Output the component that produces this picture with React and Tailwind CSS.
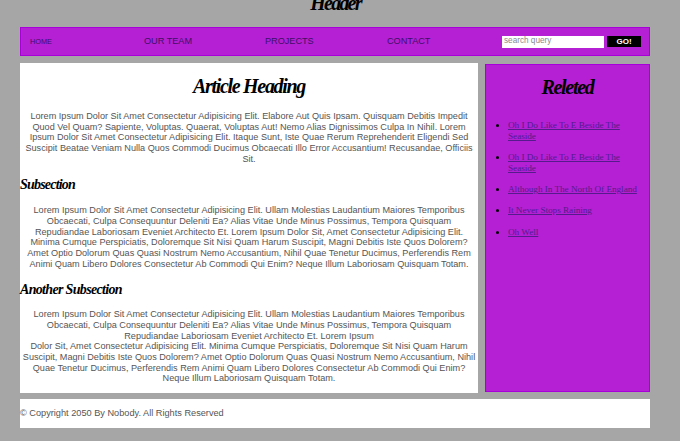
const para1 = [
  'Lorem Ipsum Dolor Sit Amet Consectetur Adipisicing Elit. Elabore Aut Quis Ipsam. Quisquam Debitis Impedit',
  'Quod Vel Quam? Sapiente, Voluptas. Quaerat, Voluptas Aut! Nemo Alias Dignissimos Culpa In Nihil. Lorem',
  'Ipsum Dolor Sit Amet Consectetur Adipisicing Elit. Itaque Sunt, Iste Quae Rerum Reprehenderit Eligendi Sed',
  'Suscipit Beatae Veniam Nulla Quos Commodi Ducimus Obcaecati Illo Error Accusantium! Recusandae, Officiis',
  'Sit.',
]
const para2 = [
  'Lorem Ipsum Dolor Sit Amet Consectetur Adipisicing Elit. Ullam Molestias Laudantium Maiores Temporibus',
  'Obcaecati, Culpa Consequuntur Deleniti Ea? Alias Vitae Unde Minus Possimus, Tempora Quisquam',
  'Repudiandae Laboriosam Eveniet Architecto Et. Lorem Ipsum Dolor Sit, Amet Consectetur Adipisicing Elit.',
  'Minima Cumque Perspiciatis, Doloremque Sit Nisi Quam Harum Suscipit, Magni Debitis Iste Quos Dolorem?',
  'Amet Optio Dolorum Quas Quasi Nostrum Nemo Accusantium, Nihil Quae Tenetur Ducimus, Perferendis Rem',
  'Animi Quam Libero Dolores Consectetur Ab Commodi Qui Enim? Neque Illum Laboriosam Quisquam Totam.',
]
const para3 = [
  'Lorem Ipsum Dolor Sit Amet Consectetur Adipisicing Elit. Ullam Molestias Laudantium Maiores Temporibus',
  'Obcaecati, Culpa Consequuntur Deleniti Ea? Alias Vitae Unde Minus Possimus, Tempora Quisquam',
  'Repudiandae Laboriosam Eveniet Architecto Et. Lorem Ipsum',
  'Dolor Sit, Amet Consectetur Adipisicing Elit. Minima Cumque Perspiciatis, Doloremque Sit Nisi Quam Harum',
  'Suscipit, Magni Debitis Iste Quos Dolorem? Amet Optio Dolorum Quas Quasi Nostrum Nemo Accusantium, Nihil',
  'Quae Tenetur Ducimus, Perferendis Rem Animi Quam Libero Dolores Consectetur Ab Commodi Qui Enim?',
  'Neque Illum Laboriosam Quisquam Totam.',
]
const related = [
  'Oh I Do Like To E Beside The Seaside',
  'Oh I Do Like To E Beside The Seaside',
  'Although In The North Of England',
  'It Never Stops Raining',
  'Oh Well',
]

function Para({ lines, className }) {
  return (
    <div className={className}>
      {lines.map((line, i) => (
        <p key={i} className="whitespace-nowrap">{line}</p>
      ))}
    </div>
  )
}

export default function App() {
  return (
    <div className="h-[441px] w-[680px] overflow-hidden bg-[#a6a6a6] font-['Liberation_Sans',sans-serif]">
      <header className="h-[27px] overflow-hidden pr-[9px] text-center">
        <h1 className="-mt-[9px] font-['Liberation_Serif',serif] text-[20px] leading-[24px] font-bold tracking-[-1.8px] text-black italic">Header</h1>
      </header>

      <div className="ml-5 w-[630px]">
        <nav className="flex h-[29px] items-center border border-[#a800d8] bg-[#b520d4] pr-[8px] pl-[9px] text-[#3f0f66]">
          <a className="w-[114px] pt-px text-[7.3px]">HOME</a>
          <a className="w-[121px] text-[9.15px]">OUR TEAM</a>
          <a className="w-[122px] text-[9.15px]">PROJECTS</a>
          <a className="w-[115px] text-[9.15px]">CONTACT</a>
          <input
            placeholder="search query"
            className="h-[12px] w-[102px] bg-white px-[2px] text-[8.2px] placeholder:text-[#8a8a8a]"
          />
          <button className="ml-[3px] h-[11px] w-[34px] bg-black text-[8px] leading-none font-bold text-white">GO!</button>
        </nav>

        <div className="mt-[7px] flex h-[330px] gap-[7px]">
          <main className="flex w-[458px] flex-col bg-white text-center text-[9.15px] leading-[10.67px] text-[#555]">
            <h2 className="mt-[12px] font-['Liberation_Serif',serif] text-[20px] leading-[23px] font-bold tracking-[-1.3px] text-black italic">Article Heading</h2>
            <Para lines={para1} className="mt-[13px] flex flex-col items-center" />
            <h3 className="mt-[13px] text-left font-['Liberation_Serif',serif] text-[14px] leading-[16px] font-bold tracking-[-0.8px] text-black italic">Subsection</h3>
            <Para lines={para2} className="mt-[12px] flex flex-col items-center" />
            <h3 className="mt-[13px] text-left font-['Liberation_Serif',serif] text-[14px] leading-[16px] font-bold tracking-[-0.67px] text-black italic">Another Subsection</h3>
            <Para lines={para3} className="mt-[11px] flex flex-col items-center" />
          </main>

          <aside className="mt-px h-[328px] flex-1 border border-[#a800d8] bg-[#b520d4]">
            <h2 className="mt-[11px] text-center font-['Liberation_Serif',serif] text-[20px] leading-[23px] font-bold tracking-[-1.3px] text-black italic">Releted</h2>
            <ul className="mt-[21px] list-disc pr-[9px] pl-[22px] font-['Liberation_Serif',serif] text-[9.15px] leading-[10.67px] text-[#551a8b] marker:text-black">
              {related.map((item, i) => (
                <li key={i} className="mb-[10.67px]"><a className="underline">{item}</a></li>
              ))}
            </ul>
          </aside>
        </div>

        <footer className="mt-[6px] flex h-[29px] items-center bg-white text-[9.2px] text-[#555]">
          © Copyright 2050 By Nobody. All Rights Reserved
        </footer>
      </div>
    </div>
  )
}
